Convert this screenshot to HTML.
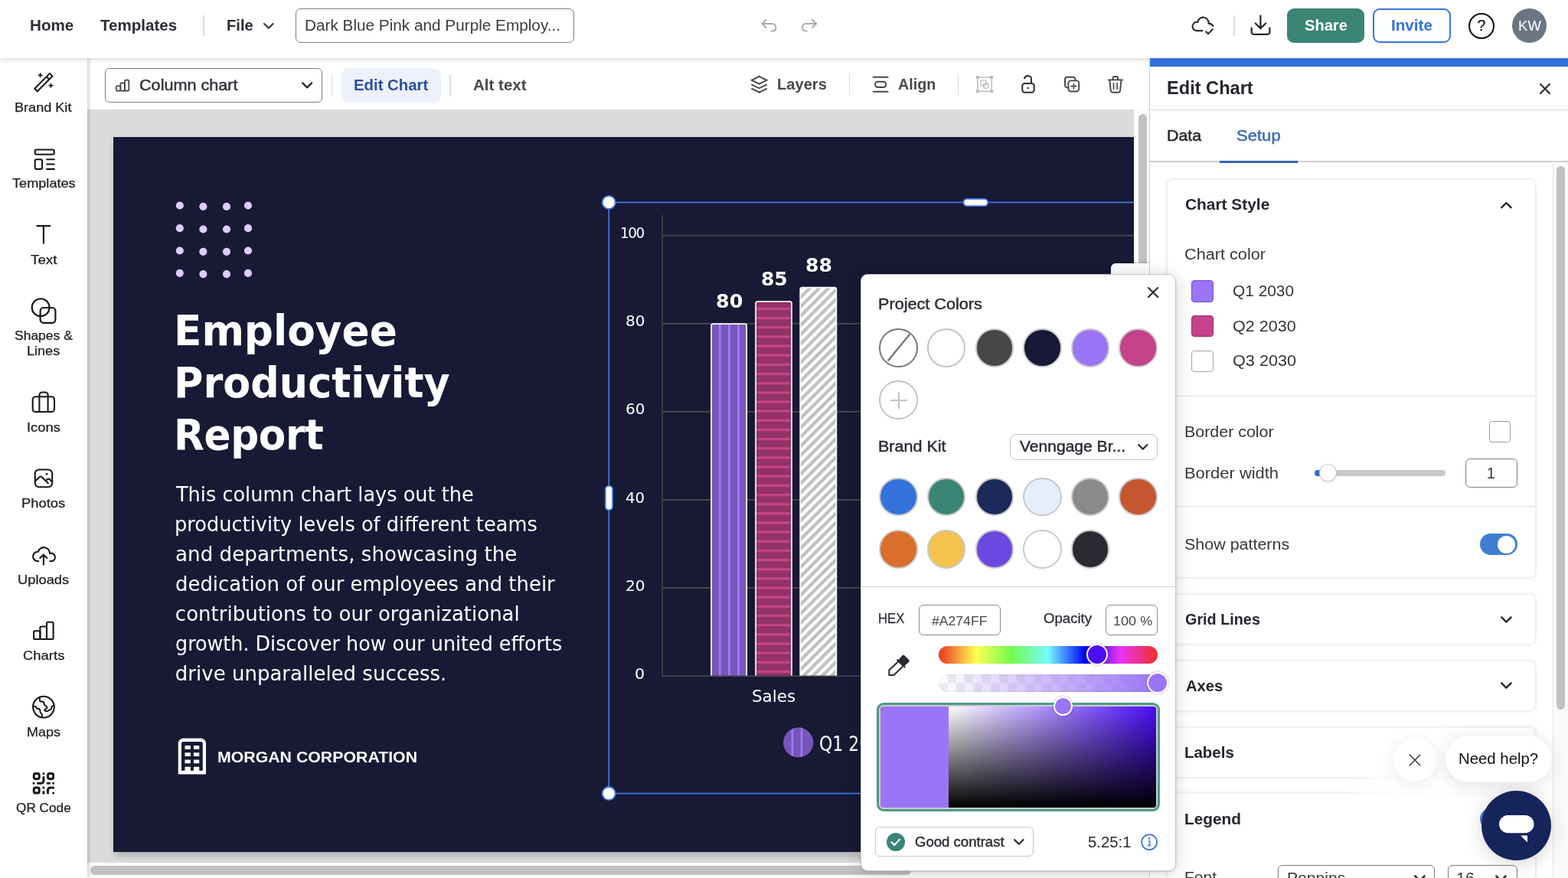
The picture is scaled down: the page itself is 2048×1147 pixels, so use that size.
<!DOCTYPE html>
<html lang="en"><head><meta charset="utf-8">
<title>Dark Blue Pink and Purple Employee Productivity Report - Edit Chart</title>
<style>
*{box-sizing:border-box;margin:0;padding:0}
html,body{width:2048px;height:1147px;overflow:hidden;background:#fff}
body{font-family:"Liberation Sans",sans-serif;color:#25252d;position:relative}
.b{position:absolute;display:block}
.t{position:absolute;display:block;white-space:nowrap;font-style:normal}
.w{position:absolute;left:0;top:0;width:0;height:0;display:block;list-style:none}
#app{position:absolute;left:0;top:0;width:2048px;height:1147px;overflow:hidden;will-change:transform}
svg{overflow:visible}
.ic{fill:none;stroke:#25252d;stroke-width:2;stroke-linecap:round;stroke-linejoin:round}
</style></head><body><div id="app">

<main class="w" id="canvas">
<div class="b" style="left:114.00px;top:143.00px;width:1388.00px;height:1004.00px;background:#dbdbdb"></div>
<section class="b" style="left:148.00px;top:178.60px;width:1333.00px;height:934.40px;background:#181935;box-shadow:0 7px 9px -2px rgba(0,0,0,.2)"></section>
</main>
<article class="w" id="slide">
<svg class="b" style="left:0.00px;top:0.00px;pointer-events:none" width="2048.00" height="1147.00" viewBox="0 0 2048.00 1147.00"><circle cx="234.8" cy="268.5" r="5.1" fill="#dccdfb"/><circle cx="265.4" cy="269.8" r="5.1" fill="#dccdfb"/><circle cx="296.0" cy="269.8" r="5.1" fill="#dccdfb"/><circle cx="324.0" cy="268.5" r="5.1" fill="#dccdfb"/><circle cx="234.8" cy="298.2" r="5.1" fill="#dccdfb"/><circle cx="265.4" cy="299.5" r="5.1" fill="#dccdfb"/><circle cx="296.0" cy="299.5" r="5.1" fill="#dccdfb"/><circle cx="324.0" cy="298.2" r="5.1" fill="#dccdfb"/><circle cx="234.8" cy="327.5" r="5.1" fill="#dccdfb"/><circle cx="265.4" cy="328.8" r="5.1" fill="#dccdfb"/><circle cx="296.0" cy="328.8" r="5.1" fill="#dccdfb"/><circle cx="324.0" cy="327.5" r="5.1" fill="#dccdfb"/><circle cx="234.8" cy="356.8" r="5.1" fill="#dccdfb"/><circle cx="265.4" cy="358.1" r="5.1" fill="#dccdfb"/><circle cx="296.0" cy="358.1" r="5.1" fill="#dccdfb"/><circle cx="324.0" cy="356.8" r="5.1" fill="#dccdfb"/></svg>
<h1 class="w">
<span class="t" style="left:226.81px;top:400px;font-size:55.00px;line-height:64px;font-weight:700;color:#fff;transform:scaleX(0.9683);transform-origin:0 0;font-family:'DejaVu Sans','Liberation Sans',sans-serif;">Employee</span>
<span class="t" style="left:226.88px;top:468px;font-size:55.00px;line-height:64px;font-weight:700;color:#fff;transform:scaleX(0.9534);transform-origin:0 0;font-family:'DejaVu Sans','Liberation Sans',sans-serif;">Productivity</span>
<span class="t" style="left:226.95px;top:536px;font-size:55.00px;line-height:64px;font-weight:700;color:#fff;letter-spacing:-0.397px;transform:scaleX(0.9400);transform-origin:0 0;font-family:'DejaVu Sans','Liberation Sans',sans-serif;">Report</span>
</h1>
<p class="w">
<span class="t" style="left:230.43px;top:631px;font-size:26.00px;line-height:30px;font-weight:400;color:#fff;transform:scaleX(0.9838);transform-origin:0 0;font-family:'DejaVu Sans','Liberation Sans',sans-serif;">This column chart lays out the</span>
<span class="t" style="left:227.99px;top:670px;font-size:26.00px;line-height:30px;font-weight:400;color:#fff;transform:scaleX(0.9863);transform-origin:0 0;font-family:'DejaVu Sans','Liberation Sans',sans-serif;">productivity levels of different teams</span>
<span class="t" style="left:228.73px;top:709px;font-size:26.00px;line-height:30px;font-weight:400;color:#fff;transform:scaleX(1.0072);transform-origin:0 0;font-family:'DejaVu Sans','Liberation Sans',sans-serif;">and departments, showcasing the</span>
<span class="t" style="left:228.87px;top:748px;font-size:26.00px;line-height:30px;font-weight:400;color:#fff;transform:scaleX(0.9973);transform-origin:0 0;font-family:'DejaVu Sans','Liberation Sans',sans-serif;">dedication of our employees and their</span>
<span class="t" style="left:228.87px;top:787px;font-size:26.00px;line-height:30px;font-weight:400;color:#fff;font-family:'DejaVu Sans','Liberation Sans',sans-serif;">contributions to our organizational</span>
<span class="t" style="left:228.90px;top:826px;font-size:26.00px;line-height:30px;font-weight:400;color:#fff;transform:scaleX(0.9772);transform-origin:0 0;font-family:'DejaVu Sans','Liberation Sans',sans-serif;">growth. Discover how our united efforts</span>
<span class="t" style="left:228.87px;top:865px;font-size:26.00px;line-height:30px;font-weight:400;color:#fff;font-family:'DejaVu Sans','Liberation Sans',sans-serif;">drive unparalleled success.</span>
</p>
<span class="t" style="left:283.82px;top:977px;font-size:21.00px;line-height:23px;font-weight:700;color:#fff;transform:scaleX(1.0140);transform-origin:0 0;">MORGAN CORPORATION</span>
<svg class="b" style="left:0.00px;top:0.00px;" width="2048.00" height="1147.00" viewBox="0 0 2048.00 1147.00"><path fill="#fff" fill-rule="evenodd" d="M232.75 1011.4V971.2a6.6 6.6 0 0 1 6.6 -6.6H262.4a6.6 6.6 0 0 1 6.6 6.6V1011.4ZM237 1006.7V971.6a2.7 2.7 0 0 1 2.7 -2.7H262.1a2.7 2.7 0 0 1 2.7 2.7V1006.7H260.25V1001.8H252.9V1006.7H248.9V1001.8H241.5V1006.7Z"/><path fill="#fff" d="M241.5 974h7.4v4.8h-7.4zM252.9 974h7.35v4.8h-7.35zM241.5 983.2h7.4v4.8h-7.4zM252.9 983.2h7.35v4.8h-7.35zM241.5 992.4h7.4v4.8h-7.4zM252.9 992.4h7.35v4.8h-7.35z"/></svg>
<!--CHART-->
</article>
<figure class="w" id="chart">
<svg class="b" style="left:0.00px;top:0.00px;pointer-events:none" width="2048.00" height="1147.00" viewBox="0 0 2048.00 1147.00"><defs>
<pattern id="pv" x="934.170" y="0" width="12.155" height="12.155" patternUnits="userSpaceOnUse"><rect width="12.155" height="12.155" fill="#7657b9"/><rect x="4.65" width="2.85" height="12.155" fill="#9f76f9"/></pattern>
<pattern id="ph" x="0" y="396" width="12.155" height="12.155" patternUnits="userSpaceOnUse"><rect width="12.155" height="12.155" fill="#923266"/><rect y="5.9" width="12.155" height="3" fill="#c9448d"/></pattern>
<pattern id="pd" x="1046" y="376" width="12.155" height="12.155" patternUnits="userSpaceOnUse"><rect width="12.155" height="12.155" fill="#fff"/><path d="M-3.039 3.039L3.039 -3.039M0 12.155L12.155 0M9.116 15.194L15.194 9.116" stroke="#c0c0c0" stroke-width="4.3"/></pattern>
<clipPath id="lg"><circle cx="1042.7" cy="970" r="19.6"/></clipPath><clipPath id="bc"><rect x="900" y="300" width="250" height="582.6"/></clipPath>
</defs><rect x="865" y="306.8" width="640" height="1.8" fill="#4a4944"/><rect x="865" y="421.9" width="640" height="1.8" fill="#4a4944"/><rect x="865" y="536.9" width="640" height="1.8" fill="#4a4944"/><rect x="865" y="652.0" width="640" height="1.8" fill="#4a4944"/><rect x="865" y="767.0" width="640" height="1.8" fill="#4a4944"/><rect x="864.2" y="281" width="1.7" height="603" fill="#414141"/><rect x="864.2" y="882.5" width="640" height="1.5" fill="#4d4c48"/><g clip-path="url(#bc)"><rect x="929.0" y="423.1" width="46.2" height="470" rx="2.6" fill="url(#pv)" stroke="#fbfbfb" stroke-width="1.7"/><rect x="987.1" y="393.8" width="46.9" height="499" rx="2.6" fill="url(#ph)" stroke="#fbfbfb" stroke-width="1.7"/><rect x="1045.2" y="375.6" width="47.2" height="517" rx="2.6" fill="url(#pd)" stroke="#fbfbfb" stroke-width="1.7"/></g><g clip-path="url(#lg)"><rect x="1020" y="948" width="46" height="44" fill="#7657b9"/><rect x="1033.6" y="948" width="2.6" height="44" fill="#9f76f9"/><rect x="1045.6" y="948" width="2.6" height="44" fill="#9f76f9"/></g><rect x="795.3" y="264.4" width="760" height="772.2" fill="none" stroke="#3b78e0" stroke-width="1.8"/><circle cx="795.2" cy="264.4" r="8.6" fill="#fff" stroke="#3b78e0" stroke-width="1.8"/><circle cx="795.2" cy="1036.6" r="8.6" fill="#fff" stroke="#3b78e0" stroke-width="1.8"/><rect x="790.7" y="634.6" width="9.4" height="31.8" rx="4.7" fill="#fff" stroke="#3b78e0" stroke-width="1.8"/><rect x="1258.4" y="259.8" width="31.8" height="9.4" rx="4.7" fill="#fff" stroke="#3b78e0" stroke-width="1.8"/></svg>
<span class="t" style="left:809.67px;top:293px;font-size:19.60px;line-height:23px;font-weight:400;color:#fff;letter-spacing:-1.520px;transform:scaleX(0.9400);transform-origin:0 0;font-family:'DejaVu Sans','Liberation Sans',sans-serif;">100</span>
<span class="t" style="left:816.70px;top:408px;font-size:19.60px;line-height:23px;font-weight:400;color:#fff;transform:scaleX(1.0204);transform-origin:0 0;font-family:'DejaVu Sans','Liberation Sans',sans-serif;">80</span>
<span class="t" style="left:816.70px;top:523px;font-size:19.60px;line-height:23px;font-weight:400;color:#fff;transform:scaleX(1.0204);transform-origin:0 0;font-family:'DejaVu Sans','Liberation Sans',sans-serif;">60</span>
<span class="t" style="left:817.12px;top:639px;font-size:19.60px;line-height:23px;font-weight:400;color:#fff;transform:scaleX(1.0028);transform-origin:0 0;font-family:'DejaVu Sans','Liberation Sans',sans-serif;">40</span>
<span class="t" style="left:816.59px;top:754px;font-size:19.60px;line-height:23px;font-weight:400;color:#fff;transform:scaleX(1.0249);transform-origin:0 0;font-family:'DejaVu Sans','Liberation Sans',sans-serif;">20</span>
<span class="t" style="left:829.06px;top:869px;font-size:19.60px;line-height:23px;font-weight:400;color:#fff;transform:scaleX(1.0507);transform-origin:0 0;font-family:'DejaVu Sans','Liberation Sans',sans-serif;">0</span>
<span class="t" style="left:934.88px;top:379px;font-size:25.20px;line-height:29px;font-weight:700;color:#fff;transform:scaleX(1.0067);transform-origin:0 0;font-family:'DejaVu Sans','Liberation Sans',sans-serif;">80</span>
<span class="t" style="left:993.90px;top:350px;font-size:25.20px;line-height:29px;font-weight:700;color:#fff;transform:scaleX(0.9913);transform-origin:0 0;font-family:'DejaVu Sans','Liberation Sans',sans-serif;">85</span>
<span class="t" style="left:1052.00px;top:332px;font-size:25.20px;line-height:29px;font-weight:700;color:#fff;transform:scaleX(0.9936);transform-origin:0 0;font-family:'DejaVu Sans','Liberation Sans',sans-serif;">88</span>
<span class="t" style="left:982.41px;top:898px;font-size:21.00px;line-height:24px;font-weight:400;color:#fff;transform:scaleX(1.0215);transform-origin:0 0;font-family:'DejaVu Sans','Liberation Sans',sans-serif;">Sales</span>
<figcaption class="w">
<span class="t" style="left:1070.29px;top:957px;font-size:26.00px;line-height:30px;font-weight:400;color:#fff;transform:scaleX(0.8450);transform-origin:0 0;font-family:'DejaVu Sans','Liberation Sans',sans-serif;">Q1 2030</span>
</figcaption>
</figure>
<div class="w" id="scrollbars">
<div class="b" style="left:1481.20px;top:143.00px;width:20.80px;height:984.00px;background:#fafafa"></div>
<div class="b" style="left:1487.00px;top:148.60px;width:11.00px;height:201.40px;background:#c1c1c1;border-radius:6px"></div>
<div class="b" style="left:114.00px;top:1127.00px;width:1388.00px;height:20.00px;background:#fafafa"></div>
<div class="b" style="left:118.00px;top:1131.20px;width:1072.00px;height:11.50px;background:#c1c1c1;border-radius:6px"></div>
<div class="b" style="left:1451.00px;top:344.30px;width:50.50px;height:55.70px;background:#fff;border-radius:6px 0 0 6px;box-shadow:0 0 4px rgba(0,0,0,.3)"></div>
</div>
<div class="w" id="toolbar">
<div class="b" style="left:114.00px;top:76.00px;width:1388.00px;height:67.40px;background:#fff"></div>
<div class="b" style="left:136.80px;top:89.30px;width:283.80px;height:44.60px;border:1.5px solid #7d7d7d;border-radius:6px;background:#fff"></div>
<svg class="b" style="left:0.00px;top:0.00px;" width="2048.00" height="1147.00" viewBox="0 0 2048.00 1147.00"><g fill="none" stroke="#3a3a41" stroke-width="1.6"><rect x="151.9" y="112.2" width="5.5" height="6.4" rx="1.2"/><rect x="157.4" y="108.4" width="5.5" height="10.2" rx="1.2"/><rect x="162.9" y="104.6" width="5.4" height="14" rx="1.2"/></g></svg>
<span class="t" style="left:181.72px;top:100px;font-size:20.00px;line-height:22px;font-weight:400;color:#303038;transform:scaleX(1.0806);transform-origin:0 0;-webkit-text-stroke:0.45px #303038;">Column chart</span>
<svg class="b" style="left:394.00px;top:107.00px;" width="14.40" height="9.40" viewBox="0 0 14.4 9.4"><path class="ic" style="stroke:#25252d;stroke-width:2.2" d="M1.2 1.4l6 6 6-6"/></svg>
<div class="b" style="left:432.60px;top:97.50px;width:1.40px;height:28.00px;background:#dcdcdc"></div>
<div class="b" style="left:445.50px;top:89.00px;width:130.30px;height:45.20px;background:#edf1fb;border-radius:9px"></div>
<span class="t" style="left:461.68px;top:100px;font-size:20.00px;line-height:22px;font-weight:700;color:#2b509e;transform:scaleX(1.0181);transform-origin:0 0;">Edit Chart</span>
<div class="b" style="left:587.40px;top:97.50px;width:1.40px;height:28.00px;background:#dcdcdc"></div>
<span class="t" style="left:617.69px;top:100px;font-size:20.00px;line-height:22px;font-weight:700;color:#48484c;transform:scaleX(1.0268);transform-origin:0 0;">Alt text</span>
<span class="t" style="left:1015.49px;top:99px;font-size:20.00px;line-height:22px;font-weight:700;color:#48484c;transform:scaleX(1.0048);transform-origin:0 0;">Layers</span>
<div class="b" style="left:1109.00px;top:96.00px;width:1.40px;height:28.00px;background:#dcdcdc"></div>
<span class="t" style="left:1173.31px;top:99px;font-size:20.00px;line-height:22px;font-weight:700;color:#48484c;transform:scaleX(0.9834);transform-origin:0 0;">Align</span>
<div class="b" style="left:1250.60px;top:96.00px;width:1.40px;height:28.00px;background:#dcdcdc"></div>
<!--TBICONS-->
</div>
<nav class="w" id="sidebar">
<div class="b" style="left:0.00px;top:76.00px;width:114.30px;height:1071.00px;background:#fff;box-shadow:2px 0 5px rgba(0,0,0,.18)"></div>
<span class="t" style="left:19.05px;top:131px;font-size:17.00px;line-height:19px;font-weight:400;color:#1c1c22;transform:scaleX(1.0641);transform-origin:0 0;-webkit-text-stroke:0.25px #1c1c22;">Brand Kit</span>
<span class="t" style="left:15.94px;top:230px;font-size:17.00px;line-height:19px;font-weight:400;color:#1c1c22;transform:scaleX(1.0668);transform-origin:0 0;-webkit-text-stroke:0.25px #1c1c22;">Templates</span>
<span class="t" style="left:39.62px;top:330px;font-size:17.00px;line-height:19px;font-weight:400;color:#1c1c22;transform:scaleX(1.1050);transform-origin:0 0;-webkit-text-stroke:0.25px #1c1c22;">Text</span>
<span class="t" style="left:18.81px;top:429px;font-size:17.00px;line-height:19px;font-weight:400;color:#1c1c22;transform:scaleX(1.0280);transform-origin:0 0;-webkit-text-stroke:0.25px #1c1c22;">Shapes &amp;</span>
<span class="t" style="left:34.85px;top:449px;font-size:17.00px;line-height:19px;font-weight:400;color:#1c1c22;transform:scaleX(1.0627);transform-origin:0 0;-webkit-text-stroke:0.25px #1c1c22;">Lines</span>
<span class="t" style="left:34.64px;top:549px;font-size:17.00px;line-height:19px;font-weight:400;color:#1c1c22;transform:scaleX(1.0830);transform-origin:0 0;-webkit-text-stroke:0.25px #1c1c22;">Icons</span>
<span class="t" style="left:27.83px;top:648px;font-size:17.00px;line-height:19px;font-weight:400;color:#1c1c22;transform:scaleX(1.0824);transform-origin:0 0;-webkit-text-stroke:0.25px #1c1c22;">Photos</span>
<span class="t" style="left:22.93px;top:748px;font-size:17.00px;line-height:19px;font-weight:400;color:#1c1c22;transform:scaleX(1.0773);transform-origin:0 0;-webkit-text-stroke:0.25px #1c1c22;">Uploads</span>
<span class="t" style="left:29.58px;top:847px;font-size:17.00px;line-height:19px;font-weight:400;color:#1c1c22;transform:scaleX(1.0860);transform-origin:0 0;-webkit-text-stroke:0.25px #1c1c22;">Charts</span>
<span class="t" style="left:34.56px;top:947px;font-size:17.00px;line-height:19px;font-weight:400;color:#1c1c22;transform:scaleX(1.0603);transform-origin:0 0;-webkit-text-stroke:0.25px #1c1c22;">Maps</span>
<span class="t" style="left:21.03px;top:1046px;font-size:17.00px;line-height:19px;font-weight:400;color:#1c1c22;transform:scaleX(1.0121);transform-origin:0 0;-webkit-text-stroke:0.25px #1c1c22;">QR Code</span>
<!--SBICONS-->
</nav>
<header class="w" id="topbar">
<div class="b" style="left:0.00px;top:0.00px;width:2048.00px;height:76.00px;background:#fff;box-shadow:0 2px 6px rgba(0,0,0,.16)"></div>
<span class="t" style="left:39.06px;top:22px;font-size:20.00px;line-height:22px;font-weight:700;color:#2d2d36;transform:scaleX(1.0317);transform-origin:0 0;">Home</span>
<span class="t" style="left:130.99px;top:22px;font-size:20.00px;line-height:22px;font-weight:700;color:#2d2d36;transform:scaleX(1.0280);transform-origin:0 0;">Templates</span>
<div class="b" style="left:265.40px;top:19.50px;width:1.40px;height:27.50px;background:#dcdcdc"></div>
<span class="t" style="left:295.99px;top:22px;font-size:20.00px;line-height:22px;font-weight:700;color:#2d2d36;transform:scaleX(1.0062);transform-origin:0 0;">File</span>
<svg class="b" style="left:344.00px;top:29.60px;" width="13.60" height="7.80" viewBox="0 0 13.6 7.8"><path class="ic" style="stroke:#2d2d36;stroke-width:2" d="M1 1l5.8 5.8L12.6 1"/></svg>
<div class="b" style="left:386.40px;top:11.10px;width:363.80px;height:44.70px;border:1.5px solid #7d7d7d;border-radius:7px;background:#fff"></div>
<span class="t" style="left:397.94px;top:22px;font-size:20.00px;line-height:22px;font-weight:400;color:#3a3a41;transform:scaleX(1.0373);transform-origin:0 0;">Dark Blue Pink and Purple Employ...</span>
<div class="b" style="left:1680.80px;top:10.70px;width:101.40px;height:45.30px;background:#3b8574;border-radius:9px"></div>
<span class="t" style="left:1703.80px;top:21px;font-size:21.00px;line-height:23px;font-weight:700;color:#fff;transform:scaleX(0.9559);transform-origin:0 0;">Share</span>
<div class="b" style="left:1793.00px;top:10.70px;width:102.00px;height:45.30px;background:#fff;border:2px solid #3b76de;border-radius:9px"></div>
<span class="t" style="left:1816.96px;top:21px;font-size:21.00px;line-height:23px;font-weight:700;color:#3472dc;transform:scaleX(0.9846);transform-origin:0 0;">Invite</span>
<div class="b" style="left:1918.10px;top:16.60px;width:34.00px;height:34.00px;border:2.1px solid #0c0c0c;border-radius:50%"></div>
<span class="t" style="left:1929.62px;top:22px;font-size:19.50px;line-height:22px;font-weight:400;color:#111;-webkit-text-stroke:0.25px #111;">?</span>
<div class="b" style="left:1974.60px;top:10.50px;width:45.80px;height:45.80px;background:#6c7683;border-radius:50%"></div>
<span class="t" style="left:1982.52px;top:23px;font-size:18.60px;line-height:21px;font-weight:400;color:#fff;transform:scaleX(0.9980);transform-origin:0 0;">KW</span>
<div class="b" style="left:1611.40px;top:19.50px;width:1.40px;height:27.80px;background:#dcdcdc"></div>
<!--TOPICONS-->
</header>
<div class="w" id="icons"><svg class="b" style="left:0.00px;top:0.00px;pointer-events:none" width="2048.00" height="1147.00" viewBox="0 0 2048.00 1147.00"><path d="M65.0 95.9L68.55 99.45L48.8 119.3L45.25 115.7Z M60.8 100.2L64.4 103.8" fill="none" stroke="#17171c" stroke-width="2.0" stroke-linecap="round" stroke-linejoin="miter"/>
<path d="M52.70 95.30Q52.70 98.30 55.70 98.30Q52.70 98.30 52.70 101.30Q52.70 98.30 49.70 98.30Q52.70 98.30 52.70 95.30ZM66.40 108.80Q66.40 111.80 69.40 111.80Q66.40 111.80 66.40 114.80Q66.40 111.80 63.40 111.80Q66.40 111.80 66.40 108.80Z" fill="#17171c" stroke="#17171c" stroke-width="0.9" stroke-linejoin="round"/>
<rect x="45.70" y="195.50" width="25.10" height="6.20" rx="2.20" fill="none" stroke="#17171c" stroke-width="2.1"/>
<rect x="45.70" y="208.20" width="9.40" height="12.70" rx="2.20" fill="none" stroke="#17171c" stroke-width="2.1"/>
<path d="M61.2 208.2H70.8M61.2 214.5H70.8M61.2 220.9H70.8" fill="none" stroke="#17171c" stroke-width="2.1" stroke-linecap="round" stroke-linejoin="round" />
<path d="M48.4 295.1H65.4M56.9 295.1V317.7" fill="none" stroke="#17171c" stroke-width="2.1" stroke-linecap="round" stroke-linejoin="round" />
<circle cx="53.15" cy="401.65" r="11.4" fill="none" stroke="#17171c" stroke-width="2.2"/>
<rect x="52.60" y="402.00" width="19.80" height="19.80" rx="4.20" fill="none" stroke="#17171c" stroke-width="2.2"/>
<rect x="42.70" y="518.30" width="28.30" height="19.70" rx="3.60" fill="none" stroke="#17171c" stroke-width="2.1"/>
<path d="M51.4 538V516.1a3.6 3.6 0 0 1 3.6 -3.6h4a3.6 3.6 0 0 1 3.6 3.6V538" fill="none" stroke="#17171c" stroke-width="2.1" stroke-linecap="round" stroke-linejoin="round" />
<rect x="45.75" y="613.50" width="22.45" height="22.70" rx="5.20" fill="none" stroke="#17171c" stroke-width="2.1"/>
<path d="M46 628.4L51.6 623.2a2.2 2.2 0 0 1 3 0L62.8 631.2M60.4 627.6L61.6 626.3a2.4 2.4 0 0 1 3.4 0L68 629.4" fill="none" stroke="#17171c" stroke-width="2.1" stroke-linecap="round" stroke-linejoin="round" />
<circle cx="61.1" cy="619.3" r="1.35" fill="#17171c"/>
<path d="M50.2 733.1A6.2 6.2 0 0 1 43.1 726.9A6.2 6.2 0 0 1 49.9 720.85A7.62 7.62 0 0 1 64.9 722.9A5.25 5.25 0 0 1 71.89 727.85A5.25 5.25 0 0 1 65.3 733.1" fill="none" stroke="#17171c" stroke-width="2.1" stroke-linecap="round" stroke-linejoin="round" />
<path d="M56.9 737.6V724.6M52.3 729L56.9 724.4L61.4 729" fill="none" stroke="#17171c" stroke-width="2.1" stroke-linecap="round" stroke-linejoin="round" />
<rect x="44.10" y="824.20" width="8.30" height="10.80" rx="1.60" fill="none" stroke="#17171c" stroke-width="2.1"/>
<rect x="52.40" y="818.50" width="8.60" height="16.50" rx="1.60" fill="none" stroke="#17171c" stroke-width="2.1"/>
<rect x="61.00" y="812.70" width="8.60" height="22.30" rx="1.60" fill="none" stroke="#17171c" stroke-width="2.1"/>
<circle cx="56.96" cy="923.6" r="13.85" fill="none" stroke="#17171c" stroke-width="2.1"/>
<path d="M51.9 911.2V915.2Q52 916.4 53.1 916.4H55.6Q56.9 916.5 57.2 917.8L57.5 919.6Q57.9 920.9 59.1 921.7L61.2 923.3Q62 924.2 61 925.2L58.7 926.9Q57.6 927.9 58.8 928.5L61 929.1Q62.2 929.3 63.1 928.3L65.9 926.9Q67 926.5 67.2 925.5L67.5 923.3Q67.9 922.2 69.5 921.7L70.6 921.3" fill="none" stroke="#17171c" stroke-width="2.0" stroke-linecap="round" stroke-linejoin="round" />
<path d="M43.5 923.1H46.2Q47.1 923.3 47.5 924.4Q48 925.9 49.4 926.1L50.8 925.8Q51.7 925.8 52.1 927.2L52.6 930Q53 931.4 54.2 932.4Q54.9 933.2 54.9 934.6V936.9" fill="none" stroke="#17171c" stroke-width="2.0" stroke-linecap="round" stroke-linejoin="round" />
<rect x="44.30" y="1010.50" width="6.90" height="6.90" rx="2.00" fill="none" stroke="#17171c" stroke-width="3"/>
<rect x="62.60" y="1010.50" width="7.00" height="6.90" rx="2.00" fill="none" stroke="#17171c" stroke-width="3"/>
<rect x="44.30" y="1029.00" width="6.90" height="7.00" rx="2.00" fill="none" stroke="#17171c" stroke-width="3"/>
<path d="M56.9 1010.4v0.01M44.05 1023.3h0.01M69.7 1023.3h0.01M56.9 1028.9v0.01M69.7 1035.9h0.01M56.9 1015.6V1020a3.3 3.3 0 0 1 -3.3 3.3H49.5M62.3 1023.3H64.5M56.9 1034.5V1036.3M62.5 1036.1V1032.2a3.3 3.3 0 0 1 3.3 -3.3H69.7" fill="none" stroke="#17171c" stroke-width="3" stroke-linecap="round" stroke-linejoin="round" />
<path d="M991.6 99.9L1001.4 104.8L991.6 109.7L981.8 104.8ZM981.4 110.3L991.6 115.3L1001.8 110.3M981.4 115.7L991.6 120.7L1001.8 115.7" fill="none" stroke="#46464b" stroke-width="1.9" stroke-linejoin="miter"/>
<path d="M1140.6 100.8H1159.6M1140.6 119.7H1159.6" fill="none" stroke="#46464b" stroke-width="1.9" stroke-linecap="round" stroke-linejoin="round" />
<rect x="1143.10" y="106.70" width="14.10" height="7.30" rx="3.20" fill="none" stroke="#46464b" stroke-width="1.9"/>
<rect x="1276.90" y="101.00" width="18.30" height="18.30" rx="0.00" fill="none" stroke="#bcbcbc" stroke-width="1.5"/>
<rect x="1274.9" y="99.0" width="4" height="4" fill="#bcbcbc"/>
<rect x="1274.9" y="117.3" width="4" height="4" fill="#bcbcbc"/>
<rect x="1293.2" y="99.0" width="4" height="4" fill="#bcbcbc"/>
<rect x="1293.2" y="117.3" width="4" height="4" fill="#bcbcbc"/>
<rect x="1280.80" y="104.90" width="7.20" height="7.20" rx="1.60" fill="none" stroke="#bcbcbc" stroke-width="1.3"/>
<circle cx="1287.9" cy="112" r="3.3" fill="none" stroke="#bcbcbc" stroke-width="1.3"/>
<rect x="1335.30" y="109.10" width="15.50" height="11.60" rx="3.20" fill="none" stroke="#2d2d36" stroke-width="2.0"/>
<path d="M1347 109V103a4.6 4.6 0 0 0 -9 -0.6" fill="none" stroke="#2d2d36" stroke-width="2.0" stroke-linecap="round" stroke-linejoin="round" />
<circle cx="1342.8" cy="115" r="1.25" fill="#2d2d36"/>
<path d="M1395.4 114.4H1394a3 3 0 0 1 -3 -3V103.8a3 3 0 0 1 3 -3h7.4a3 3 0 0 1 3 3v1.6" fill="none" stroke="#46464b" stroke-width="1.9" stroke-linecap="round" stroke-linejoin="round" />
<rect x="1395.40" y="105.40" width="13.80" height="14.10" rx="3.20" fill="none" stroke="#46464b" stroke-width="1.9"/>
<path d="M1402.4 109.2V116M1399 112.6H1405.8" fill="none" stroke="#46464b" stroke-width="1.6" stroke-linecap="round" stroke-linejoin="round" />
<path d="M1447.6 104.4H1466.2M1453.7 104.2V102a2 2 0 0 1 2 -2h2.4a2 2 0 0 1 2 2V104.2M1449.4 104.6L1450.7 118a3 3 0 0 0 3 2.7h6.4a3 3 0 0 0 3 -2.7L1464.5 104.6" fill="none" stroke="#46464b" stroke-width="1.9" stroke-linecap="round" stroke-linejoin="round" />
<path d="M1454.5 108.5V116.4M1459.1 108.5V116.4" fill="none" stroke="#46464b" stroke-width="1.7" stroke-linecap="round" stroke-linejoin="round" />
<path d="M1000.6 25.9L995.5 31L1000.6 36.1M995.7 31H1008.6a4.8 4.8 0 0 1 0 9.6H1007.4" fill="none" stroke="#a9a9ae" stroke-width="2.0" stroke-linecap="round" stroke-linejoin="round" />
<path d="M1061 25.9L1066.2 31L1061 36.1M1066 31H1052.6a4.8 4.8 0 0 0 0 9.6H1053.8" fill="none" stroke="#a9a9ae" stroke-width="2.0" stroke-linecap="round" stroke-linejoin="round" />
<path d="M1570.4 40.1H1563.4A5.9 5.9 0 0 1 1557.5 34.25A5.9 5.9 0 0 1 1564.4 28.85A7.1 7.1 0 0 1 1578.5 30.6A6.5 6.5 0 0 1 1584.3 34" fill="none" stroke="#2a2a33" stroke-width="2.1" stroke-linecap="round" stroke-linejoin="round" />
<path d="M1575 41.3L1578 44.3L1583.9 38.3" fill="none" stroke="#2a2a33" stroke-width="2.0" stroke-linecap="round" stroke-linejoin="round" />
<path d="M1646.4 20.7V37M1639.8 30.5L1646.4 37.1L1653.2 30.5M1634.7 36.6V42a2.8 2.8 0 0 0 2.8 2.8H1655.6a2.8 2.8 0 0 0 2.8 -2.8V36.6" fill="none" stroke="#2a2a33" stroke-width="2.3" stroke-linecap="round" stroke-linejoin="round" /></svg></div>
<aside class="w" id="panel">
<div class="b" style="left:1501.00px;top:76.00px;width:547.00px;height:1071.00px;background:#fff;border-left:1.5px solid #cfcfcf"></div>
<div class="b" style="left:1502.00px;top:76.20px;width:546.00px;height:11.00px;background:#3370db"></div>
<h2 class="t" style="left:1524.07px;top:102px;font-size:23.00px;line-height:26px;font-weight:700;color:#25252d;transform:scaleX(1.0257);transform-origin:0 0;">Edit Chart</h2>
<svg class="b" style="left:2011.00px;top:108.50px;" width="14.00" height="14.00" viewBox="0 0 14 14"><path class="ic" style="stroke:#25252d;stroke-width:2" d="M1 1l12 12M13 1L1 13"/></svg>
<div class="b" style="left:1502.00px;top:143.00px;width:546.00px;height:1.20px;background:#d4d4d4"></div>
<span class="t" style="left:1524.09px;top:166px;font-size:20.00px;line-height:22px;font-weight:400;color:#25252d;transform:scaleX(1.0688);transform-origin:0 0;-webkit-text-stroke:0.45px #25252d;">Data</span>
<span class="t" style="left:1615.21px;top:166px;font-size:20.00px;line-height:22px;font-weight:400;color:#3a6ab5;transform:scaleX(1.1030);transform-origin:0 0;-webkit-text-stroke:0.45px #3a6ab5;">Setup</span>
<div class="b" style="left:1502.00px;top:209.80px;width:546.00px;height:2.60px;background:#cfcfcf"></div>
<div class="b" style="left:1593.00px;top:209.60px;width:102.00px;height:3.00px;background:#3465b4"></div>
<div class="b" style="left:2028.00px;top:213.00px;width:20.00px;height:934.00px;background:#fafafa;border-left:1px solid #e8e8e8"></div>
<div class="b" style="left:2033.30px;top:216.60px;width:11.20px;height:710.40px;background:#c1c1c1;border-radius:6px"></div>
<section class="b" style="left:1524.80px;top:235.30px;width:480.00px;height:518.90px;background:#fff;border-radius:7px;box-shadow:0 0 5px rgba(0,0,0,.17)"></section>
<h3 class="t" style="left:1547.56px;top:256px;font-size:20.00px;line-height:22px;font-weight:700;color:#25252d;transform:scaleX(1.0441);transform-origin:0 0;">Chart Style</h3>
<svg class="b" style="left:1960.30px;top:262.60px;" width="14.80" height="9.40" viewBox="0 0 14.8 9.4"><path class="ic" style="stroke:#25252d;stroke-width:2.4" d="M1.2 8.2l6.2-6.2 6.2 6.2"/></svg>
<span class="t" style="left:1547.02px;top:321px;font-size:20.00px;line-height:22px;font-weight:400;color:#35353b;transform:scaleX(1.0839);transform-origin:0 0;">Chart color</span>
<div class="b" style="left:1556.20px;top:366.00px;width:28.60px;height:28.60px;background:#9b75f7;border:1.8px solid #6f53c4;border-radius:4px"></div>
<span class="t" style="left:1610.06px;top:369px;font-size:20.00px;line-height:22px;font-weight:400;color:#35353b;transform:scaleX(1.0439);transform-origin:0 0;">Q1 2030</span>
<div class="b" style="left:1556.20px;top:411.80px;width:28.60px;height:28.40px;background:#c4428a;border:1.8px solid #952c66;border-radius:4px"></div>
<span class="t" style="left:1610.03px;top:415px;font-size:20.00px;line-height:22px;font-weight:400;color:#35353b;transform:scaleX(1.0786);transform-origin:0 0;">Q2 2030</span>
<div class="b" style="left:1556.20px;top:457.60px;width:28.60px;height:28.20px;background:#fff;border:1.8px solid #a6a6a6;border-radius:4px"></div>
<span class="t" style="left:1610.02px;top:460px;font-size:20.00px;line-height:22px;font-weight:400;color:#35353b;transform:scaleX(1.0839);transform-origin:0 0;">Q3 2030</span>
<div class="b" style="left:1524.80px;top:516.80px;width:480.00px;height:1.20px;background:#dedede"></div>
<span class="t" style="left:1546.59px;top:553px;font-size:20.00px;line-height:22px;font-weight:400;color:#35353b;transform:scaleX(1.0710);transform-origin:0 0;">Border color</span>
<div class="b" style="left:1945.00px;top:550.00px;width:28.20px;height:27.80px;background:#fff;border:1.5px solid #9a9a9a;border-radius:3.5px"></div>
<span class="t" style="left:1546.55px;top:607px;font-size:20.00px;line-height:22px;font-weight:400;color:#35353b;transform:scaleX(1.0959);transform-origin:0 0;">Border width</span>
<div class="b" style="left:1717.20px;top:613.60px;width:171.10px;height:8.40px;background:#c9c9c9;border-radius:4px"></div>
<div class="b" style="left:1717.20px;top:613.60px;width:12.80px;height:8.40px;background:#3370db;border-radius:4px 0 0 4px"></div>
<div class="b" style="left:1723.60px;top:607.30px;width:21.00px;height:21.00px;background:#fff;border-radius:50%;box-shadow:0 0 0 1px #cfcfcf,0 1px 3px rgba(0,0,0,.3)"></div>
<div class="b" style="left:1914.00px;top:598.50px;width:67.60px;height:38.90px;background:#fff;border:1.5px solid #7d7d7d;border-radius:6px"></div>
<span class="t" style="left:1941.70px;top:607px;font-size:20.00px;line-height:22px;font-weight:400;color:#35353b;">1</span>
<div class="b" style="left:1524.80px;top:661.20px;width:480.00px;height:1.20px;background:#dedede"></div>
<span class="t" style="left:1547.33px;top:700px;font-size:20.00px;line-height:22px;font-weight:400;color:#35353b;transform:scaleX(1.0728);transform-origin:0 0;">Show patterns</span>
<div class="b" style="left:1933.30px;top:697.20px;width:48.70px;height:27.80px;background:#3f7fd1;border-radius:14px"></div>
<div class="b" style="left:1956.40px;top:699.80px;width:22.80px;height:22.80px;background:#fff;border-radius:50%"></div>
<section class="b" style="left:1524.80px;top:777.30px;width:480.00px;height:63.70px;background:#fff;border-radius:7px;box-shadow:0 0 5px rgba(0,0,0,.17)"></section>
<h3 class="t" style="left:1548.01px;top:798px;font-size:20.00px;line-height:22px;font-weight:700;color:#25252d;transform:scaleX(0.9897);transform-origin:0 0;">Grid Lines</h3>
<svg class="b" style="left:1960.30px;top:804.60px;" width="14.80" height="9.40" viewBox="0 0 14.8 9.4"><path class="ic" style="stroke:#25252d;stroke-width:2.4" d="M1.2 1.4l6.2 6.2 6.2-6.2"/></svg>
<section class="b" style="left:1524.80px;top:864.00px;width:480.00px;height:63.80px;background:#fff;border-radius:7px;box-shadow:0 0 5px rgba(0,0,0,.17)"></section>
<h3 class="t" style="left:1548.50px;top:885px;font-size:20.00px;line-height:22px;font-weight:700;color:#25252d;transform:scaleX(1.0086);transform-origin:0 0;">Axes</h3>
<svg class="b" style="left:1960.30px;top:891.40px;" width="14.80" height="9.40" viewBox="0 0 14.8 9.4"><path class="ic" style="stroke:#25252d;stroke-width:2.4" d="M1.2 1.4l6.2 6.2 6.2-6.2"/></svg>
<section class="b" style="left:1524.80px;top:950.60px;width:480.00px;height:64.80px;background:#fff;border-radius:7px;box-shadow:0 0 5px rgba(0,0,0,.17)"></section>
<h3 class="t" style="left:1547.47px;top:972px;font-size:20.00px;line-height:22px;font-weight:700;color:#25252d;transform:scaleX(1.0228);transform-origin:0 0;">Labels</h3>
<section class="b" style="left:1524.80px;top:1036.80px;width:480.00px;height:163.20px;background:#fff;border-radius:7px;box-shadow:0 0 5px rgba(0,0,0,.17)"></section>
<div class="b" style="left:1760.00px;top:940.00px;width:268.00px;height:207.00px;background:radial-gradient(ellipse 150px 110px at 130px 115px,rgba(255,255,255,.95) 0%,rgba(255,255,255,.85) 50%,rgba(255,255,255,0) 100%)"></div>
<h3 class="t" style="left:1547.45px;top:1059px;font-size:20.00px;line-height:22px;font-weight:700;color:#25252d;transform:scaleX(1.0394);transform-origin:0 0;">Legend</h3>
<div class="b" style="left:1933.30px;top:1056.20px;width:48.70px;height:27.80px;background:#3f7fd1;border-radius:14px"></div>
<span class="t" style="left:1546.92px;top:1135px;font-size:20.00px;line-height:22px;font-weight:400;color:#35353b;transform:scaleX(1.0521);transform-origin:0 0;">Font</span>
<div class="b" style="left:1669.20px;top:1130.30px;width:204.60px;height:44.70px;background:#fff;border:1.5px solid #7d7d7d;border-radius:6px"></div>
<span class="t" style="left:1680.91px;top:1136px;font-size:20.00px;line-height:22px;font-weight:400;color:#35353b;transform:scaleX(1.0557);transform-origin:0 0;">Poppins</span>
<svg class="b" style="left:1846.60px;top:1143.00px;" width="14.80" height="9.40" viewBox="0 0 14.8 9.4"><path class="ic" style="stroke:#25252d;stroke-width:2.4" d="M1.2 1.4l6.2 6.2 6.2-6.2"/></svg>
<div class="b" style="left:1891.00px;top:1130.30px;width:91.00px;height:44.70px;background:#fff;border:1.5px solid #7d7d7d;border-radius:6px"></div>
<span class="t" style="left:1902.38px;top:1136px;font-size:20.00px;line-height:22px;font-weight:400;color:#35353b;transform:scaleX(1.0804);transform-origin:0 0;">16</span>
<svg class="b" style="left:1952.60px;top:1143.00px;" width="14.80" height="9.40" viewBox="0 0 14.8 9.4"><path class="ic" style="stroke:#25252d;stroke-width:2.4" d="M1.2 1.4l6.2 6.2 6.2-6.2"/></svg>
</aside>
<div class="w" id="colorpicker">
<div class="b" style="left:1124.00px;top:358.00px;width:412.00px;height:780.00px;background:#fff;border:1px solid #c8c8c8;border-radius:9px;box-shadow:0 1px 3px rgba(0,0,0,.12),0 2px 22px rgba(0,0,0,.17)"></div>
<span class="t" style="left:1147.07px;top:386px;font-size:20.00px;line-height:22px;font-weight:400;color:#2a2a33;transform:scaleX(1.0819);transform-origin:0 0;-webkit-text-stroke:0.45px #2a2a33;">Project Colors</span>
<svg class="b" style="left:1499.30px;top:374.90px;" width="14.20" height="14.00" viewBox="0 0 14.2 14"><path class="ic" style="stroke:#2a2a33;stroke-width:2.1" d="M1 1l12.2 12M13.2 1L1 13"/></svg>
<div class="b" style="left:1148.30px;top:429.10px;width:50.60px;height:50.60px;background:#fff;border:2.2px solid #787878;border-radius:50%"></div>
<svg class="b" style="left:1148.60px;top:429.40px;" width="50.00" height="50.00" viewBox="0 0 50 50"><path d="M10.6 42.6L39.4 7.4" stroke="#787878" stroke-width="2.4" fill="none"/></svg>
<div class="b" style="left:1210.90px;top:429.10px;width:50.60px;height:50.60px;background:#fff;border:2.2px solid #c4c4c4;border-radius:50%"></div>
<div class="b" style="left:1273.50px;top:429.10px;width:50.60px;height:50.60px;background:#474747;border:2.2px solid #c9c9c9;border-radius:50%"></div>
<div class="b" style="left:1336.10px;top:429.10px;width:50.60px;height:50.60px;background:#181936;border:2.2px solid #c9c9c9;border-radius:50%"></div>
<div class="b" style="left:1398.70px;top:429.10px;width:50.60px;height:50.60px;background:#9b75f7;border:2.2px solid #c9c9c9;border-radius:50%"></div>
<div class="b" style="left:1461.30px;top:429.10px;width:50.60px;height:50.60px;background:#c4428a;border:2.2px solid #c9c9c9;border-radius:50%"></div>
<div class="b" style="left:1148.30px;top:497.20px;width:50.60px;height:50.60px;background:#fff;border:2.2px solid #c4c4c4;border-radius:50%"></div>
<svg class="b" style="left:1162.60px;top:511.50px;" width="22.00" height="22.00" viewBox="0 0 22 22"><path d="M11 0v22M0 11h22" stroke="#c4c4c4" stroke-width="2" fill="none"/></svg>
<span class="t" style="left:1147.08px;top:572px;font-size:20.00px;line-height:22px;font-weight:400;color:#2a2a33;transform:scaleX(1.0757);transform-origin:0 0;-webkit-text-stroke:0.45px #2a2a33;">Brand Kit</span>
<div class="b" style="left:1319.30px;top:567.40px;width:192.50px;height:33.50px;background:#fff;border:1.5px solid #c2c2c2;border-radius:8px"></div>
<span class="t" style="left:1332.40px;top:572px;font-size:20.00px;line-height:22px;font-weight:400;color:#2a2a33;transform:scaleX(1.0517);transform-origin:0 0;-webkit-text-stroke:0.45px #2a2a33;">Venngage Br...</span>
<svg class="b" style="left:1486.00px;top:580.40px;" width="13.60" height="7.60" viewBox="0 0 13.6 7.8"><path class="ic" style="stroke:#2a2a33;stroke-width:2.2" d="M1 1l5.8 5.8L12.6 1"/></svg>
<div class="b" style="left:1148.30px;top:623.90px;width:50.60px;height:50.60px;background:#3371dc;border:2.2px solid #c9c9c9;border-radius:50%"></div>
<div class="b" style="left:1210.90px;top:623.90px;width:50.60px;height:50.60px;background:#3b8574;border:2.2px solid #c9c9c9;border-radius:50%"></div>
<div class="b" style="left:1273.50px;top:623.90px;width:50.60px;height:50.60px;background:#1b2a5b;border:2.2px solid #c9c9c9;border-radius:50%"></div>
<div class="b" style="left:1336.10px;top:623.90px;width:50.60px;height:50.60px;background:#e6eefc;border:2.2px solid #c9c9c9;border-radius:50%"></div>
<div class="b" style="left:1398.70px;top:623.90px;width:50.60px;height:50.60px;background:#8a8a8a;border:2.2px solid #c9c9c9;border-radius:50%"></div>
<div class="b" style="left:1461.30px;top:623.90px;width:50.60px;height:50.60px;background:#c5562f;border:2.2px solid #c9c9c9;border-radius:50%"></div>
<div class="b" style="left:1148.30px;top:692.30px;width:50.60px;height:50.60px;background:#d96f2b;border:2.2px solid #c9c9c9;border-radius:50%"></div>
<div class="b" style="left:1210.90px;top:692.30px;width:50.60px;height:50.60px;background:#f5c24c;border:2.2px solid #c9c9c9;border-radius:50%"></div>
<div class="b" style="left:1273.50px;top:692.30px;width:50.60px;height:50.60px;background:#6b48e1;border:2.2px solid #c9c9c9;border-radius:50%"></div>
<div class="b" style="left:1336.10px;top:692.30px;width:50.60px;height:50.60px;background:#ffffff;border:2.2px solid #c9c9c9;border-radius:50%"></div>
<div class="b" style="left:1398.70px;top:692.30px;width:50.60px;height:50.60px;background:#2a2a33;border:2.2px solid #c9c9c9;border-radius:50%"></div>
<div class="b" style="left:1125.20px;top:765.50px;width:409.60px;height:1.20px;background:#d6d6d6"></div>
<span class="t" style="left:1147.47px;top:798px;font-size:17.60px;line-height:20px;font-weight:400;color:#2a2a33;transform:scaleX(0.9479);transform-origin:0 0;-webkit-text-stroke:0.25px #2a2a33;">HEX</span>
<div class="b" style="left:1199.60px;top:790.40px;width:107.40px;height:39.60px;background:#fff;border:1.5px solid #8a8a8a;border-radius:6px"></div>
<span class="t" style="left:1217.40px;top:802px;font-size:17.00px;line-height:19px;font-weight:400;color:#45454b;transform:scaleX(1.0352);transform-origin:0 0;">#A274FF</span>
<span class="t" style="left:1363.16px;top:798px;font-size:17.60px;line-height:20px;font-weight:400;color:#2a2a33;transform:scaleX(1.0565);transform-origin:0 0;-webkit-text-stroke:0.25px #2a2a33;">Opacity</span>
<div class="b" style="left:1444.40px;top:790.40px;width:67.40px;height:39.60px;background:#fff;border:1.5px solid #8a8a8a;border-radius:6px"></div>
<span class="t" style="left:1453.95px;top:802px;font-size:17.00px;line-height:19px;font-weight:400;color:#45454b;transform:scaleX(1.0621);transform-origin:0 0;">100 %</span>
<div class="b" style="left:1225.60px;top:844.00px;width:286.70px;height:23.00px;border-radius:12px;background:linear-gradient(to right,#ea3323 0%,#ffff54 17%,#75fb4c 33%,#75fbfd 50%,#0000f5 67%,#ea33f7 83%,#ea3323 100%)"></div>
<div class="b" style="left:1418.80px;top:841.20px;width:28.00px;height:28.00px;background:#4c0ef0;border:2.2px solid #fff;border-radius:50%;box-shadow:0 0 3px rgba(0,0,0,.35)"></div>
<div class="b" style="left:1225.60px;top:881.30px;width:286.70px;height:22.50px;border-radius:12px;background:linear-gradient(to right,rgba(155,117,247,0),#9b75f7),repeating-conic-gradient(#eeeeee 0% 25%,#fff 0% 50%) 0 0/22.6px 22.6px;box-shadow:inset 0 0 0 1px rgba(0,0,0,.05)"></div>
<div class="b" style="left:1498.30px;top:878.10px;width:28.00px;height:28.00px;background:#9b75f7;border:2.2px solid #fff;border-radius:50%;box-shadow:0 0 3px rgba(0,0,0,.35)"></div>
<svg class="b" style="left:0.00px;top:0.00px;" width="2048.00" height="1147.00" viewBox="0 0 2048.00 1147.00"><path d="M1180.9 856.6L1186.8 862.4Q1187.7 863.3 1186.8 864.2L1180 870.6L1172.7 863.4L1179.1 856.6Q1180 855.7 1180.9 856.6Z" fill="#2a2a33" stroke="#2a2a33" stroke-width="1.2" stroke-linejoin="round"/><path d="M1172 862.2L1181.8 871.6M1172.9 864.6L1161.3 875.4V882H1167.4L1178.5 871.2" fill="none" stroke="#2a2a33" stroke-width="2" stroke-linecap="round" stroke-linejoin="round"/></svg>
<div class="b" style="left:1145.40px;top:918.40px;width:369.60px;height:141.60px;background:#cdcdcd;border:3px solid #4f9a8b;border-radius:9px"></div>
<div class="b" style="left:1150.00px;top:923.00px;width:89.20px;height:132.40px;background:#9b75f7;border-radius:3.5px 0 0 3.5px"></div>
<div class="b" style="left:1239.20px;top:923.00px;width:271.20px;height:132.40px;border-radius:0 3.5px 3.5px 0;background:linear-gradient(to top,#000,rgba(0,0,0,0)),linear-gradient(to right,#fff,#4a0df5)"></div>
<div class="b" style="left:1376.00px;top:910.00px;width:24.60px;height:24.60px;background:#9b75f7;border:2.2px solid #fff;border-radius:50%;box-shadow:0 0 3px rgba(0,0,0,.35)"></div>
<div class="b" style="left:1142.60px;top:1080.20px;width:207.20px;height:39.30px;background:#fff;border:1.5px solid #c8c8c8;border-radius:6px"></div>
<svg class="b" style="left:1157.50px;top:1088.30px;" width="24.00" height="24.00" viewBox="0 0 24 24"><circle cx="12" cy="12" r="12" fill="#3b8574"/><path d="M6.6 12.4l3.6 3.6 7-7.4" fill="none" stroke="#fff" stroke-width="2.2" stroke-linecap="round" stroke-linejoin="round"/></svg>
<span class="t" style="left:1194.87px;top:1090px;font-size:18.00px;line-height:20px;font-weight:400;color:#2f2f36;transform:scaleX(1.0317);transform-origin:0 0;-webkit-text-stroke:0.45px #2f2f36;">Good contrast</span>
<svg class="b" style="left:1324.00px;top:1096.00px;" width="13.60" height="7.80" viewBox="0 0 13.6 7.8"><path class="ic" style="stroke:#2a2a33;stroke-width:2.2" d="M1 1l5.8 5.8L12.6 1"/></svg>
<span class="t" style="left:1421.39px;top:1089px;font-size:20.00px;line-height:22px;font-weight:400;color:#2a2a33;transform:scaleX(1.0167);transform-origin:0 0;">5.25:1</span>
<svg class="b" style="left:1490.00px;top:1089.20px;" width="22.20" height="22.20" viewBox="0 0 22.2 22.2"><circle cx="11.1" cy="11.1" r="10" fill="#fff" stroke="#3b76de" stroke-width="1.8"/><circle cx="11.1" cy="6.6" r="1.3" fill="#3b76de"/><path d="M9.6 9.8h1.9v5.6M9.2 15.6h4" fill="none" stroke="#3b76de" stroke-width="1.6"/></svg>
</div>
<div class="w" id="help">
<div class="b" style="left:1820.00px;top:965.40px;width:56.00px;height:56.00px;background:#fff;border-radius:50%;box-shadow:0 3px 22px rgba(0,0,0,.09)"></div>
<svg class="b" style="left:1840.00px;top:985.40px;" width="16.00" height="16.00" viewBox="0 0 16 16"><path d="M0.8 0.8l14.4 14.4M15.2 0.8L0.8 15.2" stroke="#333" stroke-width="1.4" fill="none"/></svg>
<div class="b" style="left:1888.20px;top:960.50px;width:137.80px;height:61.50px;background:#fff;border-radius:31px;box-shadow:0 4px 26px rgba(0,0,0,.12)"></div>
<span class="t" style="left:1904.77px;top:980px;font-size:20.00px;line-height:22px;font-weight:400;color:#111;transform:scaleX(1.0180);transform-origin:0 0;">Need help?</span>
<div class="b" style="left:1935.10px;top:1032.80px;width:91.00px;height:91.00px;background:#16245c;border-radius:50%;box-shadow:0 4px 26px rgba(0,0,0,.16)"></div>
<svg class="b" style="left:1957.80px;top:1065.40px;" width="45.60" height="36.00" viewBox="0 0 45.6 36"><rect x="0" y="0" width="45.6" height="23.2" rx="11.6" fill="#fff"/><path d="M28 26.4h9v9z" fill="#fff"/></svg>
</div>
</div></body></html>
